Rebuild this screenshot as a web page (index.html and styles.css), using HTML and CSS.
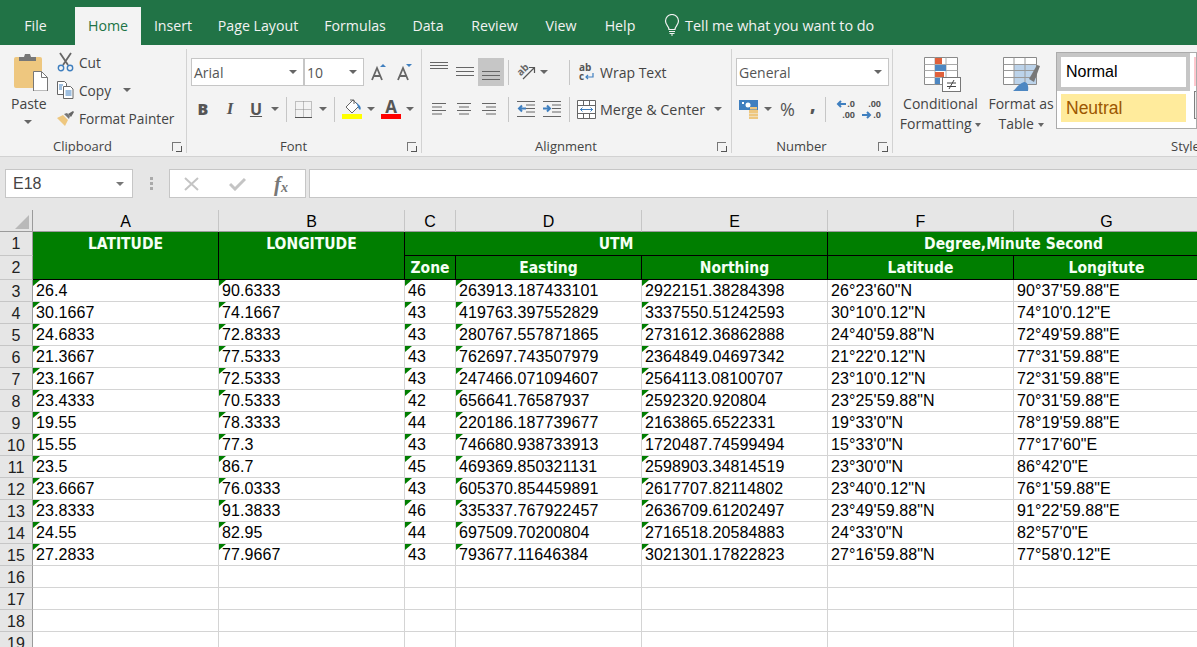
FILE: index.html
```html
<!DOCTYPE html>
<html lang="en">
<head>
<meta charset="utf-8">
<title>Excel sheet</title>
<link rel="stylesheet" href="styles.css">
</head>
<body>
<header class="tabs">
  <span class="tab t-file">File</span>
  <span class="tab active">Home</span>
  <span class="tab t-insert">Insert</span>
  <span class="tab t-layout">Page Layout</span>
  <span class="tab t-formulas">Formulas</span>
  <span class="tab t-data">Data</span>
  <span class="tab t-review">Review</span>
  <span class="tab t-view">View</span>
  <span class="tab t-help">Help</span>
  <span class="tell">
    <svg width="18" height="22" viewBox="0 0 18 22" fill="none" stroke="#f2f2f2" stroke-width="1.2"><path d="M6 15.5c0-3-3.500-4.500-3.500-8.500a6.500 6.500 0 0 1 13 0c0 4-3.500 5.500-3.500 8.500z"/><path d="M6 17.500h6M6.500 19.500h5M8 21h2"/></svg>
    Tell me what you want to do
  </span>
</header>

<section class="ribbon">
  <div class="group g-clip">
    <div class="body clip-body">
      <div class="paste">
        <svg width="34" height="38" viewBox="0 0 34 38"><rect x="0" y="4" width="28" height="31" rx="2" fill="#eec77f"/><path d="M5 8V4h5l1-3h5l1 3h5v4z" fill="#777"/><path d="M19.500 18.500h8l6 6v13.500h-14z" fill="#fff" stroke="#777"/><path d="M27.500 18.500v6h6" fill="none" stroke="#777"/></svg>
        <span class="paste-label">Paste</span>
        <i class="caret"></i>
      </div>
      <div class="clip-list">
        <div class="clip-row"><svg width="17" height="20" viewBox="0 0 17 20" fill="none"><path d="M3 1l8 12M14 1L6 13" stroke="#666" stroke-width="1.800"/><circle cx="4" cy="16" r="2.700" stroke="#3f7fbf" stroke-width="1.400"/><circle cx="13" cy="16" r="2.700" stroke="#3f7fbf" stroke-width="1.400"/></svg><span>Cut</span></div>
        <div class="clip-row"><svg width="17" height="18" viewBox="0 0 17 18" fill="#fff" stroke="#666"><path d="M.5.500h7l2 2v11h-9z"/><path d="M6.500 5.500h7l2.500 2.500v9.500H6.500z"/><path d="M8.500 10h6M8.500 12h6M8.500 14h6" stroke="#3f7fbf"/><path d="M2 4h4M2 6h3M2 8h3" stroke="#3f7fbf"/></svg><span>Copy</span><i class="caret m-copy"></i></div>
        <div class="clip-row"><svg width="17" height="15" viewBox="0 0 17 15"><path d="M0 7l6-3 5 5-3 6z" fill="#eec77f"/><path d="M7 3l3-1 3 3-1 3z" fill="#777"/><path d="M11 3l5-3 1 1-3 5z" fill="#666"/></svg><span>Format Painter</span></div>
      </div>
    </div>
    <footer class="glabel">Clipboard<i class="launch"></i></footer>
  </div>

  <div class="group g-font">
    <div class="body stack">
      <div class="row top">
        <span class="select font-name">Arial<i class="caret"></i></span>
        <span class="select font-size">10<i class="caret"></i></span>
        <svg class="grow" width="16" height="17" viewBox="0 0 16 17"><path d="M1 16L6 4l5 12M3 12h6" fill="none" stroke="#666" stroke-width="1.800"/><path d="M9 3l3-3 3 3z" fill="#3f7fbf"/></svg>
        <svg class="shrink" width="16" height="17" viewBox="0 0 16 17"><path d="M1 16L6 4l5 12M3 12h6" fill="none" stroke="#666" stroke-width="1.800"/><path d="M9 0h6l-3 3z" fill="#3f7fbf"/></svg>
      </div>
      <div class="row low">
        <b class="fmt f-b">B</b><i class="fmt f-i">I</i><u class="fmt f-u">U</u>
        <i class="caret m-ucaret"></i>
        <span class="sep m-s1"></span>
        <svg class="m-border" width="17" height="17" viewBox="0 0 17 17" fill="none" stroke="#8a8a8a" stroke-dasharray="1 1"><path d="M.5.500h16v16H.5zM8.500.500v16M.5 8.500h16"/><path d="M0 16.500h17" stroke="#555" stroke-dasharray="none"/></svg>
        <i class="caret m-7"></i>
        <span class="sep m-7"></span>
        <span class="swatch m-7"><svg width="20" height="15" viewBox="0 0 20 15"><path d="M4 8l7-7 6 6-7 7z" fill="#fff" stroke="#666"/><path d="M8 1h4v4" fill="none" stroke="#666"/><path d="M14 3l4 4c1 2 1 3 0 4-1-1-2-2-2-3z" fill="#3f7fbf"/></svg><i class="bar yellow"></i></span>
        <i class="caret m-5"></i>
        <span class="swatch m-6"><span class="letter">A</span><i class="bar red"></i></span>
        <i class="caret m-5"></i>
      </div>
    </div>
    <footer class="glabel">Font<i class="launch"></i></footer>
  </div>

  <div class="group g-align">
    <div class="body stack">
      <div class="row top">
        <svg class="al-top" width="18" height="8" viewBox="0 0 18 8" stroke="#666"><path d="M0 .5h18M0 3.500h18M0 6.500h18"/></svg>
        <svg class="m-8" width="18" height="10" viewBox="0 0 18 10" stroke="#666"><path d="M0 .5h18M0 4.500h18M0 8.500h18"/></svg>
        <span class="selected"><svg width="18" height="10" viewBox="0 0 18 10" stroke="#666"><path d="M0 .5h18M0 4.500h18M0 8.500h18"/></svg></span>
        <span class="sep m-4"></span>
        <span class="orient m-7"><span class="orient-ab">ab</span><svg width="20" height="18" viewBox="0 0 20 18" fill="none" stroke="#555" stroke-width="1.200"><path d="M7 16L18 5M13 4.500h5.500V10"/></svg></span>
        <i class="caret m-4"></i>
        <span class="sep m-w1"></span>
        <span class="wrap-ic m-9"><span class="abc">ab</span><span class="abc abc-c">c<svg width="9" height="8" viewBox="0 0 9 8" fill="none" stroke="#3f7fbf" stroke-width="1.200"><path d="M8 0v4H1M3 2L1 4l2 2"/></svg></span></span>
        <span class="label-text m-4">Wrap Text</span>
      </div>
      <div class="row low">
        <svg width="14" height="12" viewBox="0 0 14 12" stroke="#666"><path d="M0 .5h14M0 4h10M0 7.500h14M0 11h10"/></svg>
        <svg class="m-11" width="14" height="12" viewBox="0 0 14 12" stroke="#666"><path d="M0 .5h14M2 4h10M0 7.500h14M2 11h10"/></svg>
        <svg class="m-11" width="14" height="12" viewBox="0 0 14 12" stroke="#666"><path d="M0 .5h14M4 4h10M0 7.500h14M4 11h10"/></svg>
        <span class="sep m-12"></span>
        <svg class="m-8" width="18" height="16" viewBox="0 0 18 16" fill="none" stroke="#666"><path d="M0 .5h18M9 4h9M9 7.500h9M9 11h9M0 15.500h18"/><path d="M9 7.500H2M5 4.500l-3 3 3 3" stroke="#3f7fbf" stroke-width="2"/></svg>
        <svg class="m-8" width="18" height="16" viewBox="0 0 18 16" fill="none" stroke="#666"><path d="M0 .5h18M9 4h9M9 7.500h9M9 11h9M0 15.500h18"/><path d="M0 7.500h7M4 4.500l3 3-3 3" stroke="#3f7fbf" stroke-width="2"/></svg>
        <span class="sep m-8"></span>
        <svg class="m-7" width="19" height="19" viewBox="0 0 19 19" fill="#fff" stroke="#666"><path d="M.5.500h18v18H.5zM.5 5.500h18M.5 13.500h18M6.500.500v5M12.500.500v5M6.500 13.500v5M12.500 13.500v5"/><path d="M3 9.500h13M5.500 7.500l-2 2 2 2M13.500 7.500l2 2-2 2" fill="none" stroke="#3f7fbf"/></svg>
        <span class="label-text merge m-4">Merge &amp; Center</span>
        <i class="caret m-9"></i>
      </div>
    </div>
    <footer class="glabel">Alignment<i class="launch"></i></footer>
  </div>

  <div class="group g-num">
    <div class="body stack">
      <div class="row top">
        <span class="select num-format">General<i class="caret"></i></span>
      </div>
      <div class="row low">
        <svg class="n-acct" width="19" height="19" viewBox="0 0 19 19"><rect width="19" height="10" fill="#3f7fbf"/><circle cx="9" cy="5" r="2.500" fill="#fff"/><rect x="3" y="2" width="2" height="2" fill="#fff"/><rect x="10" y="10" width="9" height="3" fill="#eec77f"/><rect x="10" y="13.500" width="9" height="2.500" fill="#eec77f"/><rect x="10" y="16.500" width="9" height="2.500" fill="#eec77f"/><rect x="11" y="7" width="7" height="2.500" fill="#eec77f"/></svg>
        <i class="caret m-6"></i>
        <span class="pct">%</span>
        <span class="comma">,</span>
        <span class="sep n-sep"></span>
        <span class="dec m-10"><svg width="10" height="8" viewBox="0 0 10 8" fill="none" stroke="#3f7fbf" stroke-width="2"><path d="M10 4H2M5 1L2 4l3 3"/></svg><span class="d1">.0</span><span class="d2">.00</span></span>
        <span class="dec m-6"><span class="d2">.00</span><svg width="10" height="8" viewBox="0 0 10 8" fill="none" stroke="#3f7fbf" stroke-width="2"><path d="M0 4h8M5 1l3 3-3 3"/></svg><span class="d1">.0</span></span>
      </div>
    </div>
    <footer class="glabel">Number<i class="launch"></i></footer>
  </div>

  <div class="group g-styles">
    <div class="body styles-body">
      <div class="big big-cond">
        <svg width="37" height="35" viewBox="0 0 37 35"><path d="M.5.500h33v27H.5z" fill="#fff" stroke="#8a8a8a"/><path d="M.5 7.500h33M.5 13.500h33M.5 20.500h33M11 .5v27M22 .5v27" fill="none" stroke="#aaa"/><rect x="11" y="1" width="7" height="6" fill="#e0603b"/><rect x="11" y="8" width="11" height="6" fill="#4d87c2"/><rect x="11" y="15" width="9" height="5" fill="#e0603b"/><rect x="11" y="21" width="5" height="6" fill="#4d87c2"/><rect x="18.500" y="20.500" width="18" height="14" fill="#fff" stroke="#777"/><path d="M23 26h9M23 29.500h9M30 23l-5 9" stroke="#444" fill="none"/></svg>
        <span class="big-text">Conditional<br>Formatting <i class="caret small"></i></span>
      </div>
      <div class="big big-table">
        <svg width="37" height="35" viewBox="0 0 37 35"><path d="M.5.500h33v27H.5z" fill="#fff" stroke="#8a8a8a"/><rect x="11" y="8" width="22" height="19" fill="#bcd3ea"/><path d="M.5 7.500h33M.5 13.500h33M.5 20.500h33M11 .5v27M22 .5v27" fill="none" stroke="#999"/><path d="M26 22l8-14 3 1-6 16z" fill="#777"/><path d="M10 34c3-2 5-7 11-9 3 0 5 3 4 9z" fill="#4d87c2"/></svg>
        <span class="big-text">Format as<br>Table <i class="caret small"></i></span>
      </div>
      <div class="gallery">
        <div class="gal-col">
          <span class="st normal">Normal</span>
          <span class="st neutral">Neutral</span>
        </div>
        <div class="gal-col next">
          <span class="st bad"></span>
          <span class="st calc"></span>
        </div>
      </div>
    </div>
    <footer class="glabel styles-label">Styles</footer>
  </div>
</section>

<section class="formula">
  <div class="namebox">E18<i class="caret"></i></div>
  <div class="grip"><i></i><i></i><i></i></div>
  <div class="fx-buttons">
    <svg width="15" height="14" viewBox="0 0 15 14" fill="none" stroke="#c4c4c4" stroke-width="2"><path d="M1 1l13 12M14 1L1 13"/></svg>
    <svg class="fx-check" width="17" height="14" viewBox="0 0 17 14" fill="none" stroke="#c4c4c4" stroke-width="3"><path d="M1 7l5 5L16 2"/></svg>
    <span class="fx"><span>f</span><sub>x</sub></span>
  </div>
  <div class="fx-input"></div>
</section>

<main class="sheet">
  <div class="ch corner"><i></i></div><div class="ch">A</div><div class="ch">B</div><div class="ch">C</div><div class="ch">D</div><div class="ch">E</div><div class="ch">F</div><div class="ch">G</div>

  <div class="rh r1">1</div>
  <div class="gh tall">LATITUDE</div>
  <div class="gh tall">LONGITUDE</div>
  <div class="gh span3">UTM</div>
  <div class="gh span2">Degree,Minute Second</div>

  <div class="rh r2">2</div>
  <div class="gh">Zone</div><div class="gh">Easting</div><div class="gh">Northing</div><div class="gh">Latitude</div><div class="gh">Longitute</div>

  <div class="rh">3</div><div class="c n">26.4</div><div class="c n">90.6333</div><div class="c n">46</div><div class="c n">263913.187433101</div><div class="c n">2922151.38284398</div><div class="c">26°23'60"N</div><div class="c">90°37'59.88"E</div>
  <div class="rh">4</div><div class="c n">30.1667</div><div class="c n">74.1667</div><div class="c n">43</div><div class="c n">419763.397552829</div><div class="c n">3337550.51242593</div><div class="c">30°10'0.12"N</div><div class="c">74°10'0.12"E</div>
  <div class="rh">5</div><div class="c n">24.6833</div><div class="c n">72.8333</div><div class="c n">43</div><div class="c n">280767.557871865</div><div class="c n">2731612.36862888</div><div class="c">24°40'59.88"N</div><div class="c">72°49'59.88"E</div>
  <div class="rh">6</div><div class="c n">21.3667</div><div class="c n">77.5333</div><div class="c n">43</div><div class="c n">762697.743507979</div><div class="c n">2364849.04697342</div><div class="c">21°22'0.12"N</div><div class="c">77°31'59.88"E</div>
  <div class="rh">7</div><div class="c n">23.1667</div><div class="c n">72.5333</div><div class="c n">43</div><div class="c n">247466.071094607</div><div class="c n">2564113.08100707</div><div class="c">23°10'0.12"N</div><div class="c">72°31'59.88"E</div>
  <div class="rh">8</div><div class="c n">23.4333</div><div class="c n">70.5333</div><div class="c n">42</div><div class="c n">656641.76587937</div><div class="c n">2592320.920804</div><div class="c">23°25'59.88"N</div><div class="c">70°31'59.88"E</div>
  <div class="rh">9</div><div class="c n">19.55</div><div class="c n">78.3333</div><div class="c n">44</div><div class="c n">220186.187739677</div><div class="c n">2163865.6522331</div><div class="c">19°33'0"N</div><div class="c">78°19'59.88"E</div>
  <div class="rh">10</div><div class="c n">15.55</div><div class="c n">77.3</div><div class="c n">43</div><div class="c n">746680.938733913</div><div class="c n">1720487.74599494</div><div class="c">15°33'0"N</div><div class="c">77°17'60"E</div>
  <div class="rh">11</div><div class="c n">23.5</div><div class="c n">86.7</div><div class="c n">45</div><div class="c n">469369.850321131</div><div class="c n">2598903.34814519</div><div class="c">23°30'0"N</div><div class="c">86°42'0"E</div>
  <div class="rh">12</div><div class="c n">23.6667</div><div class="c n">76.0333</div><div class="c n">43</div><div class="c n">605370.854459891</div><div class="c n">2617707.82114802</div><div class="c">23°40'0.12"N</div><div class="c">76°1'59.88"E</div>
  <div class="rh">13</div><div class="c n">23.8333</div><div class="c n">91.3833</div><div class="c n">46</div><div class="c n">335337.767922457</div><div class="c n">2636709.61202497</div><div class="c">23°49'59.88"N</div><div class="c">91°22'59.88"E</div>
  <div class="rh">14</div><div class="c n">24.55</div><div class="c n">82.95</div><div class="c n">44</div><div class="c n">697509.70200804</div><div class="c n">2716518.20584883</div><div class="c">24°33'0"N</div><div class="c">82°57'0"E</div>
  <div class="rh">15</div><div class="c n">27.2833</div><div class="c n">77.9667</div><div class="c n">43</div><div class="c n">793677.11646384</div><div class="c n">3021301.17822823</div><div class="c">27°16'59.88"N</div><div class="c">77°58'0.12"E</div>
  <div class="rh">16</div><div class="c"></div><div class="c"></div><div class="c"></div><div class="c"></div><div class="c"></div><div class="c"></div><div class="c"></div>
  <div class="rh">17</div><div class="c"></div><div class="c"></div><div class="c"></div><div class="c"></div><div class="c"></div><div class="c"></div><div class="c"></div>
  <div class="rh">18</div><div class="c"></div><div class="c"></div><div class="c"></div><div class="c"></div><div class="c"></div><div class="c"></div><div class="c"></div>
  <div class="rh">19</div><div class="c"></div><div class="c"></div><div class="c"></div><div class="c"></div><div class="c"></div><div class="c"></div><div class="c"></div>
</main>
</body>
</html>
```

FILE: styles.css
```css
* { box-sizing: border-box; }
html, body { margin: 0; height: 647px; width: 1197px; overflow: hidden; }
body { background: #e6e6e6; font-family: "Open Sans", "Noto Sans", sans-serif; color: #444; }
i { font-style: normal; }
svg { display: block; flex: none; }

/* title tabs */
.tabs { height: 45px; background: #217346; display: flex; align-items: flex-end; font-size: 14.2px; color: #f2f2f2; }
.tab { height: 38px; display: flex; align-items: center; justify-content: center; padding-bottom: 2px; flex: none; }
.t-file { width: 71px; margin-right: 4px; }
.active { width: 66px; background: #f3f3f3; color: #217346; }
.t-insert { width: 64px; }
.t-layout { width: 106px; }
.t-formulas { width: 88px; }
.t-data { width: 58px; }
.t-review { width: 75px; }
.t-view { width: 58px; }
.t-help { width: 60px; }
.tell { height: 38px; margin-left: 13px; display: flex; align-items: center; gap: 4px; padding-bottom: 2px; font-size: 14.4px; }

/* ribbon */
.ribbon { height: 112px; background: #f3f3f3; border-bottom: 1px solid #d2d2d2; display: flex; padding-top: 4px; font-size: 14px; }
.group { display: flex; flex-direction: column; height: 104px; border-right: 1px solid #d2d2d2; flex: none; }
.g-clip { width: 187px; }
.g-font { width: 235px; }
.g-align { width: 310px; }
.g-num { width: 161px; }
.g-styles { width: 304px; border-right: 0; }
.body { height: 89px; flex: none; }
.glabel { height: 15px; line-height: 16px; font-size: 13px; text-align: center; padding-right: 21px; position: relative; color: #444; }
.launch { position: absolute; right: 5px; top: 4px; width: 9px; height: 9px; border-left: 1px solid #777; border-top: 1px solid #777; }
.launch::after { content: ""; position: absolute; right: -1px; bottom: -1px; width: 5px; height: 5px; border-right: 1px solid #555; border-bottom: 1px solid #555; }
.caret { display: block; width: 0; height: 0; flex: none; border-left: 4px solid transparent; border-right: 4px solid transparent; border-top: 4px solid #666; }
.caret.small { display: inline-block; vertical-align: middle; border-left-width: 3.5px; border-right-width: 3.5px; }
.sep { display: block; width: 1px; height: 25px; background: #c6c6c6; flex: none; }

/* clipboard */
.clip-body { display: flex; }
.paste { width: 56px; padding: 4px 0 0 14px; display: flex; flex-direction: column; }
.paste-label { margin: 3px 0 0 -3px; line-height: 20px; }
.paste .caret { margin: 6px 0 0 10px; }
.clip-list { margin-top: -1px; font-size: 13.7px; }
.clip-row { display: flex; align-items: center; gap: 5px; height: 28px; white-space: nowrap; }
.clip-row svg { margin-left: 1px; }
.m-copy { margin-left: 7px; }

/* stack rows */
.stack { display: flex; flex-direction: column; padding-top: 9px; gap: 10px; }
.row { display: flex; align-items: center; }
.row.top { height: 28px; }
.row.low { height: 26px; }
.select { background: #fff; border: 1px solid #c6c6c6; height: 28px; display: flex; align-items: center; justify-content: space-between; padding: 0 6px 0 2px; font-size: 14px; color: #555; }
.g-font .row { padding-left: 4px; }
.font-name { width: 113px; }
.font-size { width: 60px; }
.grow { margin-left: 7px; }
.shrink { margin-left: 10px; }
.fmt { font-family: "Open Sans", sans-serif; font-size: 16px; width: 24px; text-align: center; color: #555; display: block; flex: none; }
.f-b { font-weight: 800; }
.f-i { width: 30px; font-style: italic; font-weight: 700; font-family: "Liberation Serif", serif; font-size: 17px; }
.f-u { width: 22px; font-weight: 700; }
.m-ucaret { margin-left: 4px; }
.m-s1 { margin-left: 7px; }
.m-border { margin-left: 8px; }
.m-4 { margin-left: 4px; }
.m-5 { margin-left: 5px; }
.m-6 { margin-left: 6px; }
.m-7 { margin-left: 7px; }
.m-8 { margin-left: 8px; }
.m-9 { margin-left: 9px; }
.m-10 { margin-left: 10px; }
.m-11 { margin-left: 11px; }
.m-12 { margin-left: 12px; }
.swatch { display: flex; flex-direction: column; align-items: center; width: 20px; flex: none; }
.bar { display: block; width: 20px; height: 5px; }
.yellow { background: #ffff00; }
.red { background: #ff0000; }
.letter { font-family: "Open Sans", sans-serif; font-weight: 700; font-size: 17px; line-height: 15px; color: #555; }

/* alignment */
.g-align .row.top { padding-left: 8px; }
.g-align .row.low { padding-left: 10px; }
.al-top { margin-bottom: 12px; }
.selected { width: 26px; height: 28px; background: #c6c6c6; margin-left: 4px; display: flex; align-items: flex-end; justify-content: center; padding-bottom: 5px; flex: none; }
.orient { display: grid; width: 20px; height: 18px; flex: none; }
.orient > * { grid-area: 1 / 1; }
.orient-ab { font: 700 10px/10px "Open Sans", sans-serif; color: #666; transform: rotate(-45deg); width: 13px; height: 10px; margin-top: 1px; }
.m-w1 { margin-left: 21px; }
.wrap-ic { display: flex; flex-direction: column; width: 17px; flex: none; }
.abc { font: 700 10px/9px "Open Sans", sans-serif; color: #555; white-space: nowrap; display: flex; align-items: center; }
.abc-c { gap: 1px; }
.label-text { white-space: nowrap; }
.merge { font-size: 14.3px; }

/* number */
.g-num .row.top { padding-left: 4px; }
.g-num .row.low { padding-left: 7px; }
.num-format { width: 153px; }
.pct { margin-left: 8px; font-size: 18px; width: 18px; color: #555; }
.comma { margin: 0 0 8px 12px; font-size: 18px; font-weight: 800; width: 6px; color: #555; line-height: 18px; }
.n-sep { margin-left: 9px; height: 25px; }
.dec { display: grid; grid-template-columns: 9px 10px; width: 20px; font: 700 9px/11px "Open Sans", sans-serif; color: #555; flex: none; align-items: center; }
.d2 { grid-column: 1 / 3; text-align: right; }
.d1 { justify-self: end; }

/* styles */
.styles-body { display: flex; padding-top: 3px; }
.big { display: flex; flex-direction: column; align-items: center; flex: none; }
.big-cond { width: 95px; }
.big-cond svg { margin: 5px 0 0 31px; align-self: flex-start; }
.big-table { width: 66px; }
.big-table svg { margin: 5px 0 0 15px; align-self: flex-start; }
.big-text { text-align: center; line-height: 20px; margin-top: 2px; white-space: nowrap; }
.gallery { margin-left: 2px; width: 141px; height: 77px; border: 1px solid #ababab; background: #fff; display: flex; overflow: hidden; flex: none; }
.gal-col { display: flex; flex-direction: column; flex: none; }
.st { display: flex; align-items: center; padding-left: 5px; font-family: "Liberation Sans", sans-serif; font-size: 16px; width: 133px; }
.normal { height: 38px; border: 4px solid #c6c6c6; background: #fff; color: #000; }
.neutral { height: 28px; width: 125px; margin: 3px 0 0 4px; background: #ffeb9c; color: #9c5700; font-size: 17.5px; }
.gal-col.next { margin-left: 4px; padding-top: 4px; }
.bad { height: 29px; background: #ffc7ce; }
.calc { height: 28px; margin-top: 5px; background: #f2f2f2; border: 1px solid #7f7f7f; }
.styles-label { text-align: left; padding: 0 0 0 278px; white-space: nowrap; overflow: hidden; height: 18px; }

/* formula bar */
.formula { height: 53px; padding: 12px 0 0 5px; display: flex; align-items: flex-start; }
.namebox { width: 128px; height: 29px; background: #fff; border: 1px solid #c6c6c6; display: flex; align-items: center; justify-content: space-between; padding: 0 8px 0 7px; font: 16px "Liberation Sans", sans-serif; color: #444; }
.namebox .caret { border-top-color: #777; }
.grip { width: 36px; padding: 8px 0 0 17px; display: flex; flex-direction: column; gap: 2px; }
.grip i { width: 3px; height: 3px; background: #aaa; display: block; }
.fx-buttons { width: 137px; height: 29px; background: #fff; border: 1px solid #c6c6c6; display: flex; align-items: center; padding-left: 14px; }
.fx-check { margin-left: 30px; }
.fx { margin-left: 28px; font: italic 700 21px/20px "Liberation Serif", serif; color: #777; white-space: nowrap; }
.fx sub { font-size: 14px; line-height: 0; vertical-align: -1px; }
.fx-input { margin-left: 3px; flex: 1; height: 29px; background: #fff; border: 1px solid #c6c6c6; border-right: 0; }

/* sheet */
.sheet { display: grid; grid-template-columns: 33px 186px 186px 51px 186px 186px 186px 186px; grid-template-rows: 22px 24px 24px repeat(17, 22px); width: 1200px; font-family: "Liberation Sans", sans-serif; font-size: 16px; color: #000; }
.ch { background: #e6e6e6; border-bottom: 1px solid #9b9b9b; border-right: 1px solid #c6c6c6; text-align: center; line-height: 24px; height: 22px; overflow: hidden; }
.corner { position: relative; border-right: 1px solid #9b9b9b; }
.corner i { position: absolute; right: 3px; bottom: 2px; width: 0; height: 0; border-left: 14px solid transparent; border-bottom: 14px solid #b9b9b9; }
.rh { background: #e6e6e6; border-right: 1px solid #9b9b9b; border-bottom: 1px solid #c6c6c6; text-align: center; line-height: 24px; color: #222; }
.gh { background: #007e00; border-right: 1px solid #000; border-bottom: 1px solid #000; color: #f4fff4; text-align: center; font-family: "DejaVu Sans Condensed", "DejaVu Sans", sans-serif; font-stretch: condensed; font-weight: 700; font-size: 15.5px; line-height: 25px; white-space: nowrap; overflow: hidden; }
.tall { grid-row: span 2; }
.span3 { grid-column: span 3; }
.span2 { grid-column: span 2; }
.c { background: #fff; border-right: 1px solid #d4d4d4; border-bottom: 1px solid #d4d4d4; padding-left: 3px; line-height: 22px; letter-spacing: .1px; position: relative; white-space: nowrap; overflow: hidden; }
.n::before { content: ""; position: absolute; left: 0; top: 0; width: 0; height: 0; border-top: 6px solid #007e00; border-right: 7px solid transparent; }
```
